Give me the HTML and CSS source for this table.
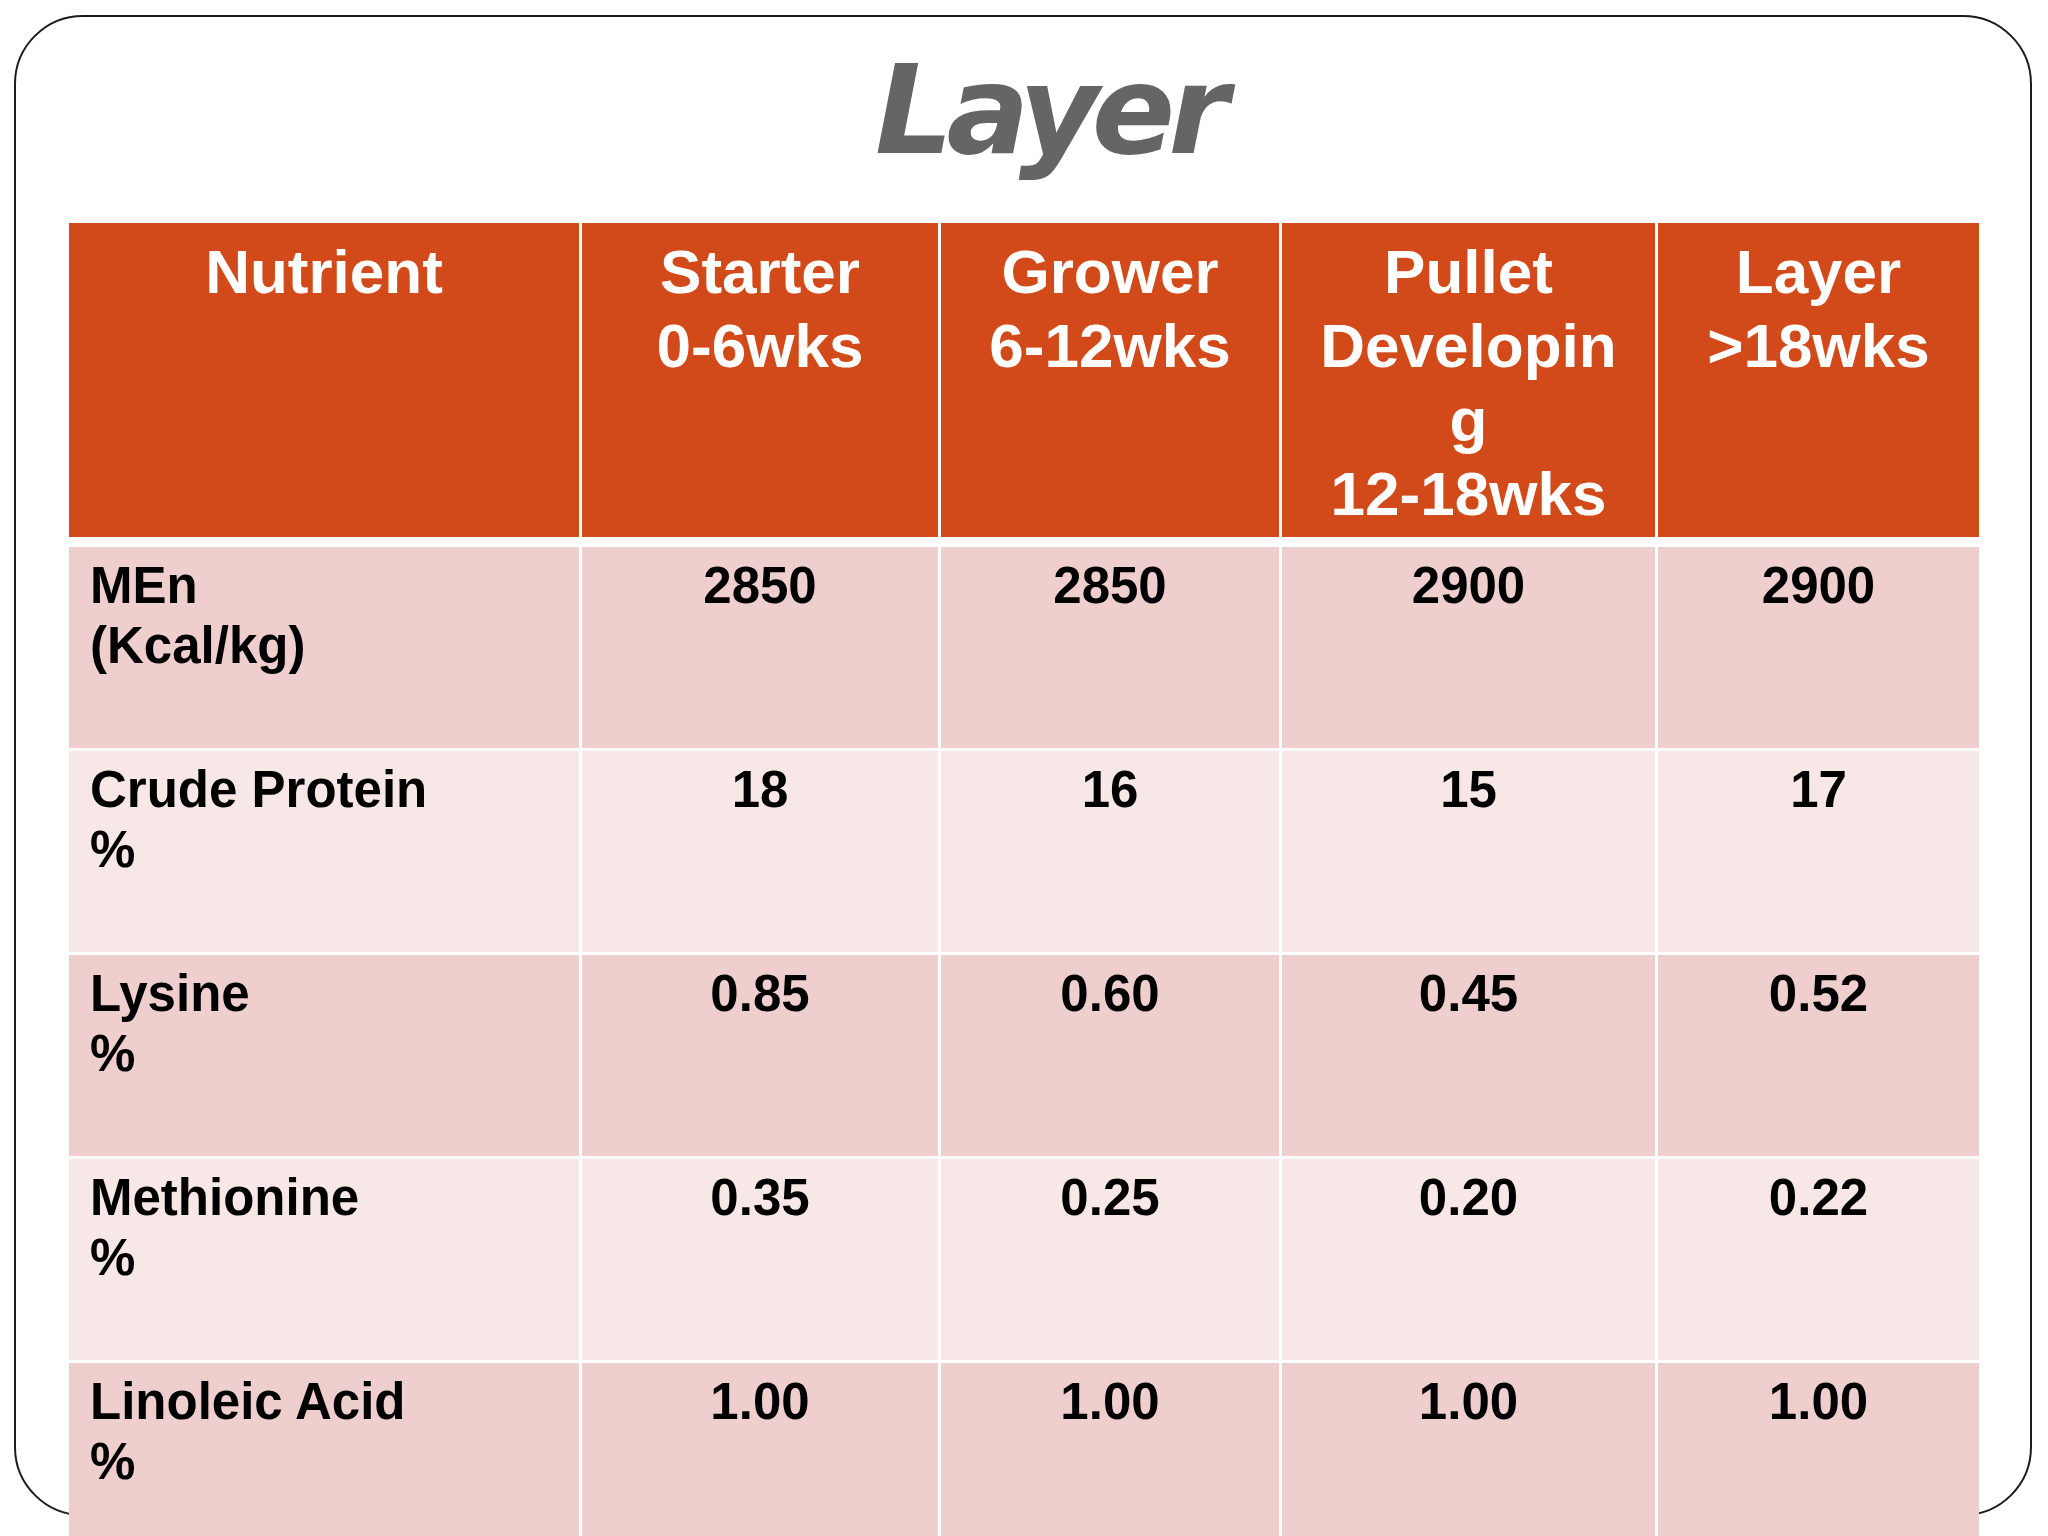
FILE: index.html
```html
<!DOCTYPE html>
<html lang="en">
<head>
<meta charset="utf-8">
<title>Layer</title>
<link rel="stylesheet" href="styles.css">
</head>
<body>
<div class="frame">
  <h1 class="title">Layer</h1>
  <div class="table">
    <div class="thead">
      <div class="th">Nutrient</div>
      <div class="th">Starter<br>0-6wks</div>
      <div class="th">Grower<br>6-12wks</div>
      <div class="th">Pullet<br>Developin<br>g<br>12-18wks</div>
      <div class="th">Layer<br>&gt;18wks</div>
    </div>
    <div class="tbody">
      <div class="td name odd">MEn<br>(Kcal/kg)</div>
      <div class="td odd">2850</div>
      <div class="td odd">2850</div>
      <div class="td odd">2900</div>
      <div class="td odd">2900</div>

      <div class="td name even">Crude Protein<br>%</div>
      <div class="td even">18</div>
      <div class="td even">16</div>
      <div class="td even">15</div>
      <div class="td even">17</div>

      <div class="td name odd">Lysine<br>%</div>
      <div class="td odd">0.85</div>
      <div class="td odd">0.60</div>
      <div class="td odd">0.45</div>
      <div class="td odd">0.52</div>

      <div class="td name even">Methionine<br>%</div>
      <div class="td even">0.35</div>
      <div class="td even">0.25</div>
      <div class="td even">0.20</div>
      <div class="td even">0.22</div>

      <div class="td name odd">Linoleic Acid<br>%</div>
      <div class="td odd">1.00</div>
      <div class="td odd">1.00</div>
      <div class="td odd">1.00</div>
      <div class="td odd">1.00</div>
    </div>
  </div>
</div>
</body>
</html>
```

FILE: styles.css
```css
html, body {
  margin: 0;
  padding: 0;
  background: #ffffff;
  overflow: hidden;
}

body {
  width: 2048px;
  height: 1536px;
  padding: 15px 0 0 14px;
  box-sizing: border-box;
  font-family: "Liberation Sans", Arial, sans-serif;
}

.frame {
  box-sizing: border-box;
  width: 2018px;
  height: 1501px;
  border: 2px solid #1c1c1c;
  border-radius: 69px;
  padding: 32px 0 0 53px;
}

.title {
  margin: 0;
  padding-left: 49px;
  width: 1910px;
  box-sizing: border-box;
  text-align: center;
  font-family: "DejaVu Sans", sans-serif;
  font-weight: bold;
  font-style: oblique;
  font-size: 123px;
  line-height: 123px;
  letter-spacing: -7px;
  color: #666565;
}

.table {
  margin-top: 51px;
  width: 1910px;
  background: #ffffff;
  position: relative;
}

.thead,
.tbody {
  display: grid;
  grid-template-columns: 510px 356px 338px 373px 321px;
  column-gap: 3px;
  background: #ffffff;
}

.thead {
  grid-template-rows: 314px;
}

.tbody {
  margin-top: 10px;
  grid-auto-rows: 201px;
  row-gap: 3px;
}

.th {
  background: #d24a19;
  color: #ffffff;
  font-weight: bold;
  font-size: 62px;
  line-height: 74px;
  text-align: center;
  padding-top: 12px;
  box-sizing: border-box;
}

.td {
  font-weight: bold;
  font-size: 51px;
  line-height: 60px;
  color: #000000;
  text-align: center;
  padding-top: 9px;
  box-sizing: border-box;
}

.td.name {
  text-align: left;
  padding-left: 21px;
}

.odd {
  background: #eecfcd;
}

.even {
  background: #f7e7e6;
}
```
